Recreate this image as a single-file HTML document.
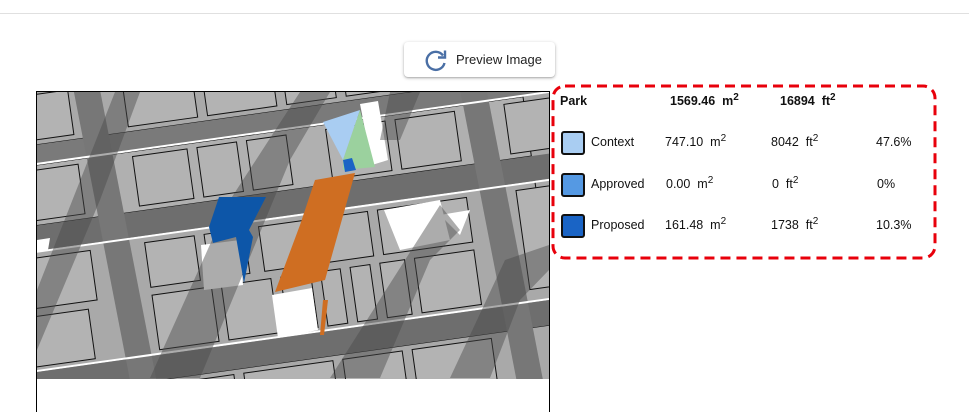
<!DOCTYPE html>
<html><head><meta charset="utf-8"><style>
html,body{margin:0;padding:0;background:#fff;width:969px;height:413px;overflow:hidden;font-family:"Liberation Sans",Arial,sans-serif;}
.topline{position:absolute;left:0;top:13px;width:969px;height:1px;background:#e0e0e0;}
.btn{position:absolute;left:404px;top:42px;width:151px;height:35px;background:#fff;border-radius:4px;box-shadow:0 1px 3px rgba(0,0,0,.3),0 1px 1px rgba(0,0,0,.1);}
.btn span{position:absolute;left:52px;top:10px;font-size:13px;color:#222;}
.btn svg{position:absolute;left:20px;top:6px;}
.map{position:absolute;left:36px;top:91px;width:512px;height:320px;border:1px solid #000;border-bottom:none;background:#fff;overflow:hidden;}
.t{position:absolute;font-size:12.5px;color:#111;white-space:nowrap;}
.b{font-weight:bold;}
sup{font-size:10px;vertical-align:5px;line-height:0;}
.sw{position:absolute;left:561px;width:20px;height:20px;border:2px solid #111;border-radius:3px;}
.frame{position:absolute;left:0;top:0;display:block;}
</style></head><body>
<div class="topline"></div>
<div class="btn"><svg width="24" height="24" viewBox="0 0 24 24"><path d="M19 7.5A9 9 0 1 0 20.5 15" fill="none" stroke="#4a6fa5" stroke-width="2.4"/><path d="M21 2.5v7h-7" fill="none" stroke="#4a6fa5" stroke-width="2.4"/></svg><span>Preview Image</span></div>
<div class="map">
<svg width="512" height="287" viewBox="37 92 512 287" style="display:block">
<rect x="37" y="92" width="512" height="287" fill="#a9a9a9"/>
<g transform="rotate(-8 293 235)" stroke="#111" stroke-width="1">
 <rect x="-40" y="30" width="580" height="80" fill="#a9a9a9"/>
 <rect x="-40" y="130" width="580" height="60" fill="#b0b0b0"/>
 <rect x="-40" y="215" width="580" height="120" fill="#a9a9a9"/>
 <rect x="-40" y="360" width="580" height="80" fill="#a9a9a9"/>
 <rect x="-60" y="110" width="640" height="20" fill="#7a7a7a" stroke="none"/>
 <rect x="-60" y="190" width="640" height="25" fill="#6e6e6e" stroke="none"/>
 <rect x="-60" y="335" width="640" height="25" fill="#6e6e6e" stroke="none"/>
 <rect x="105" y="0" width="26" height="480" fill="#777" stroke="none" transform="rotate(-3 118 235)"/>
 <rect x="485" y="0" width="26" height="480" fill="#777" stroke="none" transform="rotate(-3 498 235)"/>
 <line x1="-60" y1="129" x2="600" y2="129" stroke="#fff" stroke-width="2"/>
 <line x1="-60" y1="216" x2="600" y2="216" stroke="#fff" stroke-width="2"/>
 <line x1="-60" y1="334" x2="600" y2="334" stroke="#fff" stroke-width="2"/>
 <g fill="#b3b3b3">
 <rect x="145" y="60" width="70" height="45"/><rect x="225" y="50" width="70" height="55"/><rect x="305" y="45" width="50" height="60"/><rect x="365" y="40" width="40" height="65"/><rect x="415" y="45" width="60" height="60"/>
 <rect x="0" y="60" width="90" height="45"/><rect x="520" y="40" width="60" height="65"/>
 <rect x="145" y="135" width="55" height="50"/><rect x="210" y="135" width="40" height="50"/><rect x="260" y="135" width="40" height="50"/><rect x="340" y="135" width="60" height="50"/><rect x="410" y="135" width="60" height="50"/><rect x="0" y="135" width="90" height="50"/><rect x="520" y="135" width="60" height="50"/>
 <rect x="145" y="222" width="50" height="45"/><rect x="205" y="222" width="40" height="45"/><rect x="260" y="222" width="50" height="45"/><rect x="320" y="222" width="50" height="45"/><rect x="380" y="222" width="90" height="45"/>
 <rect x="145" y="275" width="60" height="55"/><rect x="215" y="275" width="50" height="55"/><rect x="275" y="275" width="30" height="55"/><rect x="315" y="275" width="20" height="55"/><rect x="345" y="275" width="20" height="55"/><rect x="375" y="275" width="25" height="55"/><rect x="410" y="275" width="60" height="55"/>
 <rect x="0" y="222" width="90" height="50"/><rect x="10" y="280" width="70" height="50"/><rect x="520" y="222" width="60" height="100"/>
 <rect x="145" y="365" width="70" height="50"/><rect x="225" y="365" width="90" height="50"/><rect x="325" y="365" width="60" height="50"/><rect x="395" y="365" width="80" height="50"/>
 </g>
</g>
<g fill="#fff">
 <polygon points="201,245 240,240 243,285 204,290"/>
 <polygon points="272,295 312,288 318,330 278,338"/>
 <polygon points="360,104 378,101 388,160 372,165"/>
 <polygon points="384,210 440,200 450,240 400,250"/>
 <polygon points="440,215 470,210 460,235"/>
 <polygon points="37,240 50,238 48,250 37,252"/>
</g>
<g fill="#4a4a4a" opacity="0.45">
 <polygon points="37,290 37,350 100,200 140,92 115,92"/>
 <polygon points="150,378 200,378 290,160 330,92 300,92 230,200"/>
 <polygon points="330,378 380,378 430,260 460,230 440,205"/>
 <polygon points="450,378 490,378 520,300 549,270 549,245 505,260"/>
 <polygon points="390,92 420,92 400,140 380,140"/>
</g>
<polygon points="323,122 360,110 343,160" fill="#a9cdf2"/>
<polygon points="360,110 375,167 343,170 343,160" fill="#9bd19e"/>
<polygon points="343,160 352,158 356,170 345,172" fill="#1a64c5"/>
<polygon points="219,197 266,197 249,230 253,237 244,283 236,237 213,243 209,227" fill="#0d56a8"/>
<polygon points="315,180 355,173 325,280 275,292 300,225" fill="#cf6e22"/>
<polygon points="323,300 328,300 324,335 320,335" fill="#cf6e22"/>
</svg>
</div>
<svg class="frame" width="969" height="413"><rect x="553" y="86" width="382" height="172" rx="12" fill="none" stroke="#e8000b" stroke-width="3" stroke-dasharray="10,6"/></svg>
<div class="t b" style="left:560px;top:94px">Park</div>
<div class="t b" style="left:670px;top:94px">1569.46&nbsp; m<sup>2</sup></div>
<div class="t b" style="left:780px;top:94px">16894&nbsp; ft<sup>2</sup></div>
<div class="sw" style="top:131px;background:#a9cdf2"></div>
<div class="sw" style="top:173px;background:#5599e3"></div>
<div class="sw" style="top:214px;background:#1a64c5"></div>
<div class="t" style="left:591px;top:135px">Context</div>
<div class="t" style="left:665px;top:135px">747.10&nbsp; m<sup>2</sup></div>
<div class="t" style="left:771px;top:135px">8042&nbsp; ft<sup>2</sup></div>
<div class="t" style="left:876px;top:135px">47.6%</div>
<div class="t" style="left:591px;top:177px">Approved</div>
<div class="t" style="left:666px;top:177px">0.00&nbsp; m<sup>2</sup></div>
<div class="t" style="left:772px;top:177px">0&nbsp; ft<sup>2</sup></div>
<div class="t" style="left:877px;top:177px">0%</div>
<div class="t" style="left:591px;top:218px">Proposed</div>
<div class="t" style="left:665px;top:218px">161.48&nbsp; m<sup>2</sup></div>
<div class="t" style="left:771px;top:218px">1738&nbsp; ft<sup>2</sup></div>
<div class="t" style="left:876px;top:218px">10.3%</div>
</body></html>
